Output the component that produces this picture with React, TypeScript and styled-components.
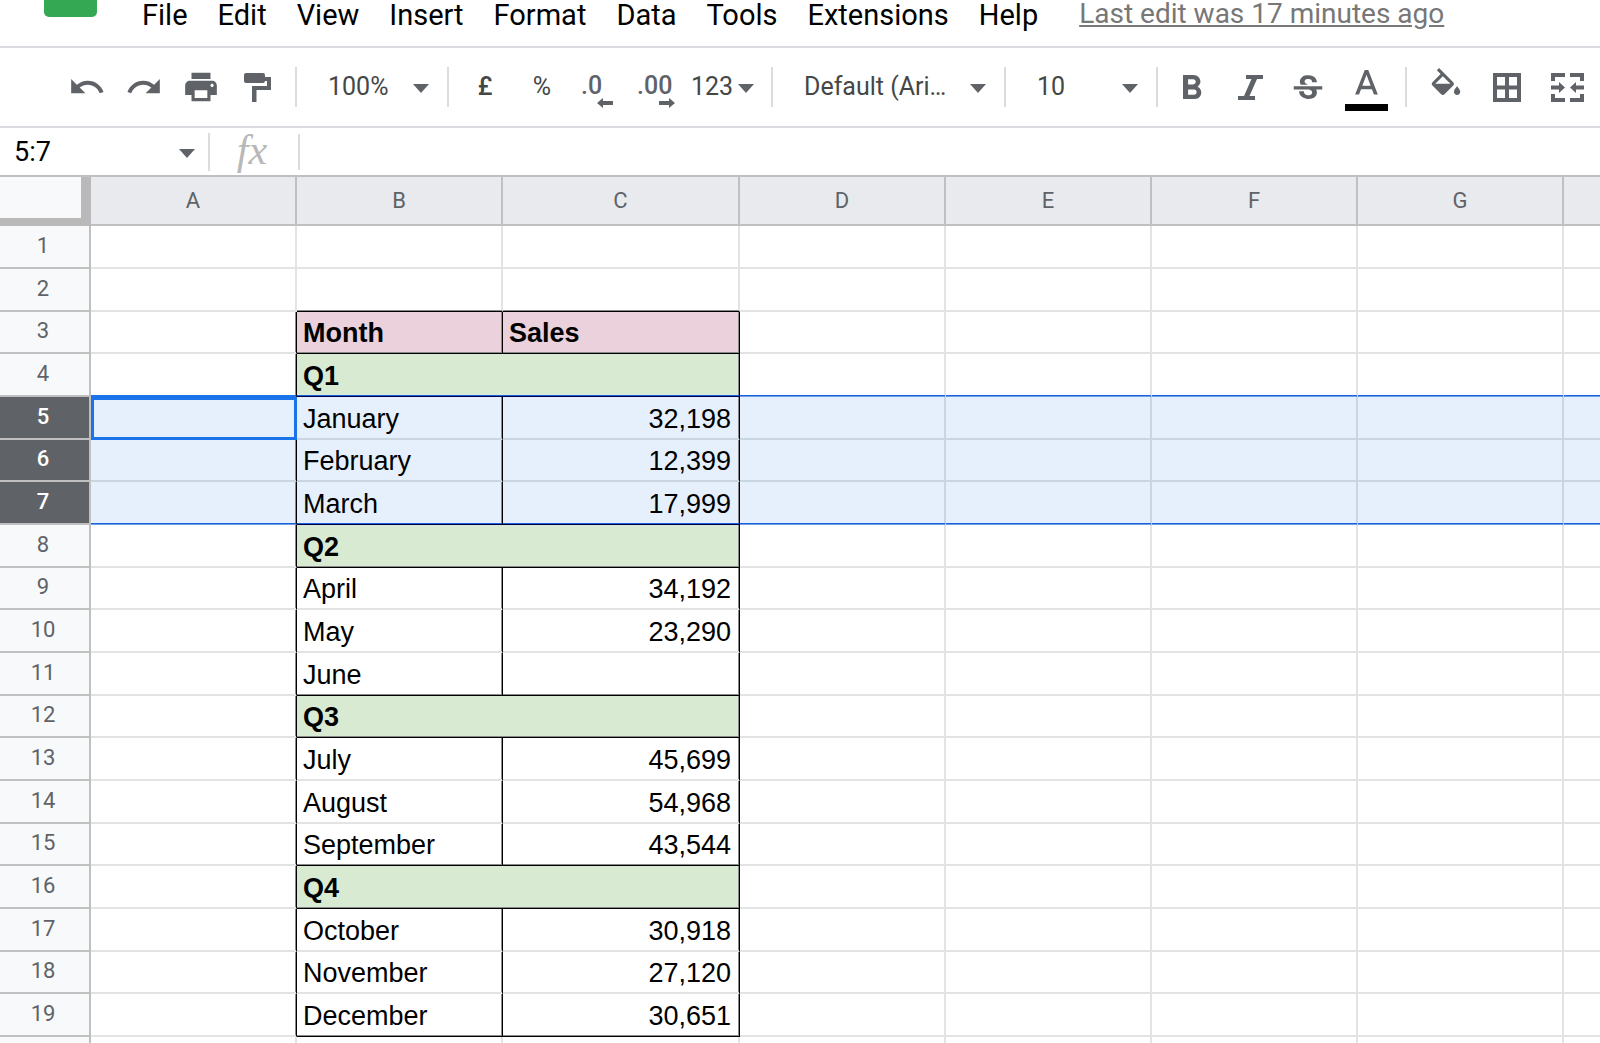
import React from "react";
import styled, { createGlobalStyle, css } from "styled-components";

const ink = "#5f6368";
const line = "#dadce0";

const GlobalStyle = createGlobalStyle`
  *, *::before, *::after { box-sizing: border-box; }
  body { margin: 0; background: #fff; font-family: Roboto, "Liberation Sans", sans-serif; }
  button, input, select { font: inherit; color: inherit; }
`;

const Page = styled.div`
  display: flex;
  flex-direction: column;
  height: 100vh;
  overflow: hidden;
`;

const MenuBar = styled.header`
  display: flex;
  align-items: flex-start;
  height: 48px;
  flex: none;
  padding-left: 44px;
  border-bottom: 2px solid ${line};
  white-space: nowrap;
`;

const Logo = styled.div`
  width: 53px;
  height: 17px;
  margin-right: 45px;
  flex: none;
  background: #34a853;
  border-radius: 0 0 5px 5px;
`;

const Menu = styled.nav`
  display: flex;
  gap: 30px;
`;

const MenuButton = styled.button`
  padding: 0;
  border: 0;
  background: none;
  font-size: 29px;
  line-height: 30px;
  color: #000;
`;

const LastEdit = styled.a`
  margin-left: 41px;
  font-size: 28px;
  line-height: 28px;
  color: #777;
  text-decoration: underline;
`;

const Toolbar = styled.div`
  display: flex;
  align-items: center;
  height: 80px;
  flex: none;
  border-bottom: 2px solid ${line};
  overflow: hidden;
`;

const Group = styled.div<{ $left?: number; $right?: number }>`
  display: flex;
  flex: none;
  padding-left: ${(p) => p.$left ?? 0}px;
  padding-right: ${(p) => p.$right ?? 0}px;
`;

const Tool = styled.button<{ $w?: number; $strong?: boolean }>`
  display: flex;
  align-items: center;
  justify-content: center;
  gap: 5px;
  flex: none;
  width: ${(p) => p.$w ?? 57}px;
  height: 56px;
  padding: 0;
  border: 0;
  background: none;
  font-size: 25px;
  line-height: 30px;
  font-weight: ${(p) => (p.$strong ? 500 : 400)};
  color: #444746;
`;

const Decimals = styled.span<{ $w: number }>`
  display: flex;
  flex-direction: column;
  gap: 2px;
  width: ${(p) => p.$w}px;
  padding-top: 10px;
  text-align: left;
  line-height: 20px;
  font-weight: 500;
  color: ${ink};

  svg { align-self: flex-end; }
`;

const Divider = styled.span<{ $h?: number }>`
  flex: none;
  width: 2px;
  height: ${(p) => p.$h ?? 40}px;
  background: ${line};
`;

const Picker = styled.label<{ $w: number }>`
  display: flex;
  align-items: center;
  flex: none;
  width: ${(p) => p.$w}px;
  padding: 0 18px 0 31px;
  font-size: 25px;
  line-height: 30px;
  color: #444746;
`;

const Select = styled.select`
  flex: 1;
  min-width: 0;
  height: 30px;
  padding: 0;
  border: 0;
  appearance: none;
  background: none;
`;

const Icon = styled.svg`
  display: block;
  flex: none;
  fill: ${ink};
`;

const CaretIcon = styled(Icon)`
  margin-top: 3px;
`;

const FormulaBar = styled.div`
  display: flex;
  align-items: center;
  height: 47px;
  flex: none;
  color: #000;
`;

const NameBox = styled.label`
  display: flex;
  align-items: center;
  width: 208px;
  padding: 0 13px 0 14px;
`;

const NameInput = styled.input`
  flex: 1;
  min-width: 0;
  padding: 0;
  border: 0;
  outline: 0;
  font-size: 27px;
  line-height: 32px;
`;

const Fx = styled.span`
  width: 88px;
  padding: 0 4px 4px 0;
  text-align: center;
  font: italic 42px/40px "Liberation Serif", serif;
  color: #b8b8b8;
`;

const FormulaInput = styled.input`
  flex: 1;
  min-width: 0;
  height: 40px;
  padding: 0 8px;
  border: 0;
  outline: 0;
  background: none;
`;

const Sheet = styled.table`
  width: 100%;
  flex: none;
  table-layout: fixed;
  border-collapse: separate;
  border-spacing: 0;
  border-top: 2px solid #c0c0c0;
`;

const Col = styled.col<{ $w?: number }>`
  width: ${(p) => (p.$w ? p.$w + "px" : "auto")};
`;

const Row = styled.tr`
  height: 43px;
  &:nth-child(3n) { height: 42px; }
`;

const Corner = styled.td`
  height: 49px;
  padding: 0;
  background: #f8f9fa;
  border-right: 10px solid #b9b9b9;
  border-bottom: 8px solid #b9b9b9;
`;

const ColumnHead = styled.th`
  padding: 0;
  background: #e8eaed;
  border-right: 2px solid #c0c0c0;
  border-bottom: 2px solid #c0c0c0;
  font-size: 22px;
  line-height: 26px;
  font-weight: 400;
  color: ${ink};

  &:last-child { border-right: 0; }
`;

const RowHead = styled.th<{ $on?: boolean }>`
  padding: 0 3px 2px 0;
  background: ${(p) => (p.$on ? ink : "#f8f9fa")};
  color: ${(p) => (p.$on ? "#fff" : ink)};
  border-right: 2px solid #c0c0c0;
  border-bottom: 2px solid #c0c0c0;
  font-size: 22px;
  line-height: 26px;
  font-weight: ${(p) => (p.$on ? 500 : 400)};
`;

/* Every rule is two pixels: an inner one (inset shadow) and an outer one (border). */
const rules = {
  grid: ["#e2e3e3", "#e2e3e3"],
  gridOn: ["#cad5e2", "#cad5e2"],
  black: ["#8a8a8a", "#000"],
  blue: ["#1a62db", "#6f9dec"],
  blueBlack: ["#1a62db", "#00004d"],
  active: ["#1a73e8", "#1a73e8"],
};
type Rule = keyof typeof rules;

type CellProps = {
  $on?: boolean;
  $right?: Rule;
  $bottom?: Rule;
  $fill?: string;
  $bold?: boolean;
  $num?: boolean;
  $active?: boolean;
};

const Cell = styled.td<CellProps>`
  padding: 1px 8px 0 6px;
  overflow: hidden;
  white-space: nowrap;
  font: ${(p) => (p.$bold ? 700 : 400)} 27px/30px "Liberation Sans", Arial, sans-serif;
  color: #000;
  text-align: ${(p) => (p.$num ? "right" : "left")};
  background: ${(p) => p.$fill ?? (p.$on ? "#e6f0fd" : "#fff")};
  ${(p) => {
    const base: Rule = p.$on ? "gridOn" : "grid";
    const right = rules[p.$right ?? base];
    const bottom = rules[p.$bottom ?? base];
    return css`
      border-right: 1px solid ${right[1]};
      border-bottom: 1px solid ${bottom[1]};
      box-shadow: inset 0 -1px ${bottom[0]}, inset -1px 0 ${right[0]};
      &:last-child {
        border-right: 0;
        box-shadow: inset 0 -1px ${bottom[0]};
      }
    `;
  }}
  ${(p) =>
    p.$active &&
    css`
      outline: 3px solid #1a73e8;
      outline-offset: -3px;
    `}
`;

const Caret = () => (
  <CaretIcon width="16" height="9" viewBox="0 0 16 9" aria-hidden="true">
    <path d="M0 0h16L8 9z" />
  </CaretIcon>
);

type GlyphProps = { d: string; w?: number; h?: number; box?: string };
const Glyph = ({ d, w = 38, h = 38, box = "0 0 24 24" }: GlyphProps) => (
  <Icon width={w} height={h} viewBox={box} preserveAspectRatio="none" aria-hidden="true">
    <path fillRule="evenodd" d={d} />
  </Icon>
);

const glyphs = {
  undo: "M12.5 8c-2.65 0-5.05.99-6.9 2.6L2 7v9h9l-3.62-3.62c1.39-1.16 3.16-1.88 5.12-1.88 3.54 0 6.55 2.31 7.6 5.5l2.37-.78C21.08 11.03 17.15 8 12.5 8z",
  redo: "M18.4 10.6C16.55 8.99 14.15 8 11.5 8c-4.65 0-8.58 3.03-9.96 7.22L3.9 16c1.05-3.19 4.05-5.5 7.6-5.5 1.95 0 3.73.72 5.12 1.88L13 16h9V7l-3.6 3.6z",
  print: "M19 8H5c-1.66 0-3 1.34-3 3v6h4v4h12v-4h4v-6c0-1.66-1.34-3-3-3zm-3 11H8v-5h8v5zm3-7c-.55 0-1-.45-1-1s.45-1 1-1 1 .45 1 1-.45 1-1 1zm-1-9H6v4h12V3z",
  paint: "M2 0h17q2 0 2 2v2h6v13H12.500v12H8V13h15V8h-2q0 2-2 2H2Q0 10 0 8V2Q0 0 2 0z",
  bold: "M15.6 10.79c.97-.67 1.65-1.77 1.65-2.79 0-2.26-1.75-4-4-4H7v14h7.04c2.09 0 3.71-1.7 3.71-3.79 0-1.52-.86-2.82-2.15-3.42zM10 6.5h3c.83 0 1.5.67 1.5 1.5s-.67 1.5-1.5 1.5h-3v-3zm3.500 9H10v-3h3.500c.83 0 1.500.67 1.500 1.500s-.67 1.500-1.500 1.500z",
  italic: "M8 0H25V4H19L11.500 21H17V25H0V21H6L13.500 4H8z",
  strike: "M7.24 8.75c-.26-.48-.39-1.03-.39-1.67 0-.61.13-1.16.4-1.67.26-.5.63-.93 1.11-1.29.48-.35 1.05-.63 1.7-.83.66-.19 1.39-.29 2.18-.29.81 0 1.54.11 2.21.34.66.22 1.23.54 1.69.94.47.4.83.88 1.08 1.43.25.55.38 1.15.38 1.81h-3.01c0-.31-.05-.59-.15-.85-.09-.27-.24-.49-.44-.68-.2-.19-.45-.33-.75-.44-.3-.1-.66-.16-1.06-.16-.39 0-.74.04-1.03.13-.29.09-.53.21-.72.36-.19.16-.34.34-.44.55-.1.21-.15.43-.15.66 0 .48.25.88.74 1.21.38.25.77.48 1.41.7H7.39c-.05-.08-.11-.17-.15-.25zM21 12v-2H3v2h9.62c.18.07.4.14.55.2.37.17.66.34.87.51.21.17.35.36.43.57.07.2.11.43.11.69 0 .23-.05.45-.14.66-.09.2-.23.38-.42.53-.19.15-.42.26-.71.35-.29.08-.63.13-1.01.13-.43 0-.83-.04-1.18-.13s-.66-.23-.91-.42c-.25-.19-.45-.44-.59-.75-.14-.31-.25-.76-.25-1.21H6.4c0 .55.08 1.13.24 1.58.16.45.37.85.65 1.21.28.35.6.66.98.92.37.26.78.48 1.22.65.44.17.9.3 1.38.39.48.08.96.13 1.44.13.8 0 1.53-.09 2.18-.28s1.21-.45 1.67-.79c.46-.34.82-.77 1.07-1.27s.38-1.07.38-1.71c0-.6-.1-1.14-.31-1.61-.05-.11-.11-.23-.17-.33H21z",
  fill: "M16.56 8.94L7.62 0 6.21 1.41l2.38 2.38-5.15 5.15c-.59.59-.59 1.54 0 2.12l5.5 5.5c.29.29.68.44 1.06.44s.77-.15 1.06-.44l5.5-5.5c.59-.58.59-1.53 0-2.12zM5.21 10L10 5.21 14.79 10H5.21zM19 11.5s-2 2.17-2 3.5c0 1.1.9 2 2 2s2-.9 2-2c0-1.33-2-3.5-2-3.5z",
  borders: "M0 0H28V29H0zM4 4V12.500H12V4zM16 4V12.500H24V4zM4 16.500V25H12V16.500zM16 16.500V25H24V16.500z",
  merge: "M0 0H14V4H4V8H0zM19 0H33V8H29V4H19zM0 21H4V25H14V29H0zM29 21H33V29H19V25H29zM0 12.500H8V9L14 14.500L8 20V16.500H0zM33 12.500H25V9L19 14.500L25 20V16.500H33z",
  left: "M0 5L6 0V3H16V7H6V10z",
  right: "M16 5L10 0V3H0V7H10V10z",
};

type Entry = { kind: "blank" | "head" | "quarter" | "data"; label?: string; value?: string };
const q = (label: string): Entry => ({ kind: "quarter", label });
const d = (label: string, value = ""): Entry => ({ kind: "data", label, value });

const entries: Entry[] = [
  { kind: "blank" },
  { kind: "blank" },
  { kind: "head", label: "Month", value: "Sales" },
  q("Q1"), d("January", "32,198"), d("February", "12,399"), d("March", "17,999"),
  q("Q2"), d("April", "34,192"), d("May", "23,290"), d("June"),
  q("Q3"), d("July", "45,699"), d("August", "54,968"), d("September", "43,544"),
  q("Q4"), d("October", "30,918"), d("November", "27,120"), d("December", "30,651"),
];

const PINK = "#ead1dc";
const GREEN = "#d9ead3";

function SheetRow({ n, entry }: { n: number; entry: Entry }) {
  const on = n >= 5 && n <= 7;
  const next = entries[n];
  const head = entry.kind === "head";
  const selectionEdge = n === 4 || n === 7;
  const ruled = head || entry.kind === "quarter" || !next || next.kind === "head" || next.kind === "quarter";
  const edge: Rule | undefined = selectionEdge ? "blueBlack" : ruled ? "black" : undefined;
  const outer: Rule | undefined = selectionEdge ? "blue" : undefined;
  const side: Rule | undefined = entry.kind === "blank" ? undefined : "black";
  const fill = head ? PINK : undefined;
  return (
    <Row>
      <RowHead scope="row" $on={on}>{n}</RowHead>
      <Cell $on={on} $right={side} $bottom={n === 4 ? "active" : outer} $active={n === 5} />
      {entry.kind === "quarter" ? (
        <Cell colSpan={2} $bold $fill={GREEN} $right={side} $bottom={edge}>{entry.label}</Cell>
      ) : (
        <>
          <Cell $on={on} $bold={head} $fill={fill} $right={side} $bottom={edge}>{entry.label}</Cell>
          <Cell $on={on} $bold={head} $num={!head} $fill={fill} $right={side} $bottom={edge}>{entry.value}</Cell>
        </>
      )}
      {["D", "E", "F", "G", "H"].map((c) => (
        <Cell key={c} $on={on} $bottom={outer} />
      ))}
    </Row>
  );
}

export default function App() {
  return (
    <Page>
      <GlobalStyle />
      <MenuBar>
        <Logo />
        <Menu>
          {["File", "Edit", "View", "Insert", "Format", "Data", "Tools", "Extensions", "Help"].map((m) => (
            <MenuButton key={m}>{m}</MenuButton>
          ))}
        </Menu>
        <LastEdit href="#history">Last edit was 17 minutes ago</LastEdit>
      </MenuBar>

      <Toolbar>
        <Group $left={58} $right={9}>
          <Tool aria-label="Undo"><Glyph d={glyphs.undo} /></Tool>
          <Tool aria-label="Redo"><Glyph d={glyphs.redo} /></Tool>
          <Tool aria-label="Print"><Glyph d={glyphs.print} /></Tool>
          <Tool aria-label="Paint format"><Glyph d={glyphs.paint} w={27} h={29} box="0 0 27 29" /></Tool>
        </Group>
        <Divider />
        <Picker $w={150}>
          <Select aria-label="Zoom"><option>100%</option></Select>
          <Caret />
        </Picker>
        <Divider />
        <Group $right={7}>
          <Tool aria-label="Currency" $w={72} $strong>£</Tool>
          <Tool aria-label="Percent" $w={42}>%</Tool>
          <Tool aria-label="Decrease decimal places" $w={68}>
            <Decimals $w={32}>.0<Glyph d={glyphs.left} w={16} h={10} box="0 0 16 10" /></Decimals>
          </Tool>
          <Tool aria-label="Increase decimal places" $w={50}>
            <Decimals $w={38}>.00<Glyph d={glyphs.right} w={16} h={10} box="0 0 16 10" /></Decimals>
          </Tool>
          <Tool aria-label="More formats" $w={83}>123<Caret /></Tool>
        </Group>
        <Divider />
        <Picker $w={231}>
          <Select aria-label="Font"><option>Default (Ari…</option></Select>
          <Caret />
        </Picker>
        <Divider />
        <Picker $w={150}>
          <Select aria-label="Font size"><option>10</option></Select>
          <Caret />
        </Picker>
        <Divider />
        <Group $left={6} $right={10}>
          <Tool $w={58} aria-label="Bold"><Glyph d={glyphs.bold} w={20} h={24} box="7 4 11.75 14" /></Tool>
          <Tool aria-label="Italic"><Glyph d={glyphs.italic} w={25} h={25} box="0 0 25 25" /></Tool>
          <Tool $w={58} aria-label="Strikethrough"><Glyph d={glyphs.strike} box="0 -1.500 24 24" /></Tool>
          <Tool $w={58} aria-label="Text colour">
            <Icon width="43" height="48" viewBox="0 0 43 48" aria-hidden="true">
              <path
                transform="translate(.5 3.500) scale(1.75)"
                d="M11 2L5.5 16h2.25l1.12-3h6.25l1.12 3h2.25L13 2h-2zm-1.380 9L12 4.670 14.380 11H9.620z"
              />
              <rect y="41" width="43" height="7" fill="#000" />
            </Icon>
          </Tool>
        </Group>
        <Divider />
        <Group $left={8}>
          <Tool $w={61} aria-label="Fill colour"><Glyph d={glyphs.fill} /></Tool>
          <Tool $w={61} aria-label="Borders"><Glyph d={glyphs.borders} w={28} h={29} box="0 0 28 29" /></Tool>
          <Tool $w={61} aria-label="Merge cells"><Glyph d={glyphs.merge} w={33} h={29} box="0 0 33 29" /></Tool>
        </Group>
      </Toolbar>

      <FormulaBar>
        <NameBox>
          <NameInput aria-label="Name box" defaultValue="5:7" />
          <Caret />
        </NameBox>
        <Divider $h={38} />
        <Fx>fx</Fx>
        <Divider $h={36} />
        <FormulaInput aria-label="Formula" />
      </FormulaBar>

      <Sheet>
        <colgroup>
          <Col $w={91} /><Col $w={206} /><Col $w={206} /><Col $w={237} />
          <Col $w={206} /><Col $w={206} /><Col $w={206} /><Col $w={206} /><Col />
        </colgroup>
        <thead>
          <tr>
            <Corner />
            {["A", "B", "C", "D", "E", "F", "G", ""].map((c) => (
              <ColumnHead key={c} scope="col">{c}</ColumnHead>
            ))}
          </tr>
        </thead>
        <tbody>
          {entries.map((entry, i) => (
            <SheetRow key={i} n={i + 1} entry={entry} />
          ))}
          <Row>
            <RowHead />
            {["A", "B", "C", "D", "E", "F", "G", "H"].map((c) => (
              <Cell key={c} />
            ))}
          </Row>
        </tbody>
      </Sheet>
    </Page>
  );
}
